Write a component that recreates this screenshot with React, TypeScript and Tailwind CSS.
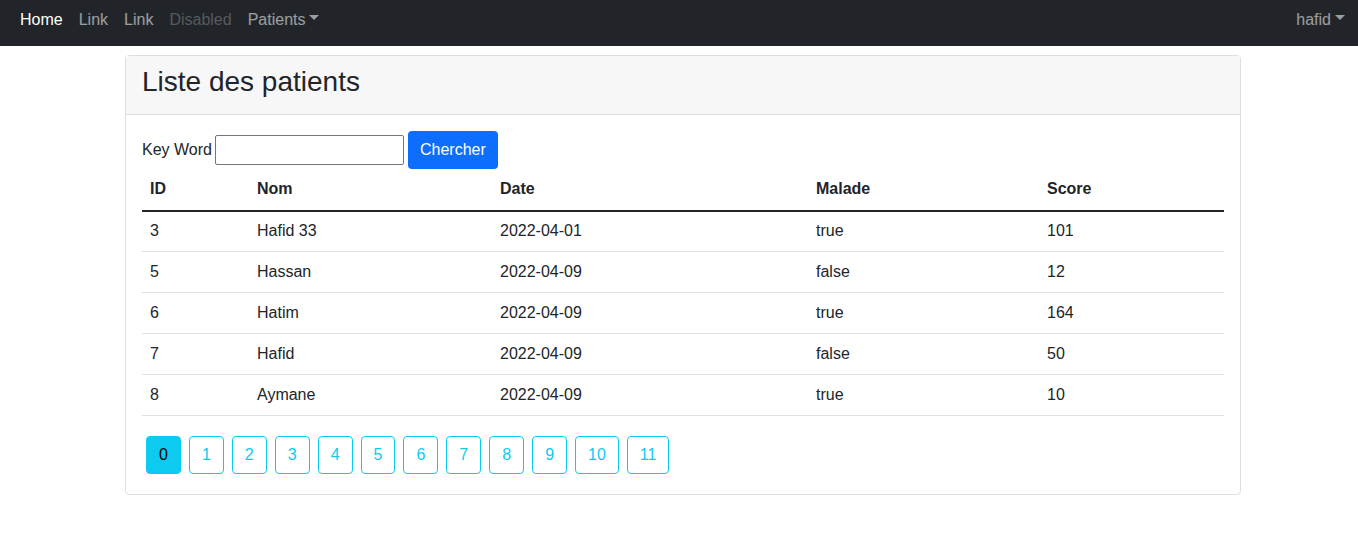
import React, { useState } from "react";

type Patient = { id: number; nom: string; date: string; malade: boolean; score: number };

const patients: Patient[] = [
  { id: 3, nom: "Hafid 33", date: "2022-04-01", malade: true, score: 101 },
  { id: 5, nom: "Hassan", date: "2022-04-09", malade: false, score: 12 },
  { id: 6, nom: "Hatim", date: "2022-04-09", malade: true, score: 164 },
  { id: 7, nom: "Hafid", date: "2022-04-09", malade: false, score: 50 },
  { id: 8, nom: "Aymane", date: "2022-04-09", malade: true, score: 10 },
];

const pages = [0, 1, 2, 3, 4, 5, 6, 7, 8, 9, 10, 11];

function Caret() {
  return (
    <span className="ml-[4px] inline-block h-0 w-0 translate-y-[-3px] border-x-[5px] border-t-[5px] border-x-transparent border-t-current align-middle" />
  );
}

export default function App() {
  const [keyword, setKeyword] = useState("");
  const [current, setCurrent] = useState(0);

  return (
    <div className="min-h-[537px] bg-white text-[16px] leading-6 text-[#212529] [font-family:'Liberation_Sans',Arial,sans-serif]">
      {/* navbar */}
      <nav className="flex h-[46px] items-start justify-between bg-[#212529] px-3 pt-[8px]">
        <ul className="flex">
          <li><a href="#" className="block px-2 text-white">Home</a></li>
          <li><a href="#" className="block px-2 text-white/55">Link</a></li>
          <li><a href="#" className="block px-2 text-white/55">Link</a></li>
          <li><span className="block px-2 text-white/25">Disabled</span></li>
          <li>
            <a href="#" className="block px-2 text-white/55">
              Patients<Caret />
            </a>
          </li>
        </ul>
        <a href="#" className="block pl-2 pr-[1px] text-white/55">
          hafid<Caret />
        </a>
      </nav>

      <div className="ml-[125px] mt-[9px] w-[1116px]">
        <div className="rounded-[4px] border border-[#dfdfdf]">
          <div className="border-b border-[#dfdfdf] bg-[#f7f7f7] px-4 pb-[7px] pt-[9px]">
            <h3 className="text-[28px] font-medium leading-[1.2] mb-0 pb-[8px]">Liste des patients</h3>
          </div>
          <div className="px-4 pt-4 pb-[16px]">
            <form className="flex items-center" onSubmit={(e) => e.preventDefault()}>
              <label className="mr-[3px]">Key Word</label>
              <input
                value={keyword}
                onChange={(e) => setKeyword(e.target.value)}
                className="h-[30px] w-[189px] rounded-[2px] border border-[#767676] px-1 outline-none"
              />
              <button
                type="submit"
                className="ml-[4px] h-[38px] rounded-[4px] bg-[#0d6efd] px-3 text-white"
              >
                Chercher
              </button>
            </form>

            <table className="w-[1082px] table-fixed border-collapse">
              <colgroup>
                <col className="w-[107px]" />
                <col className="w-[243px]" />
                <col className="w-[316px]" />
                <col className="w-[231px]" />
                <col className="w-[185px]" />
              </colgroup>
              <thead>
                <tr className="border-b-2 border-[#212529] text-left font-bold">
                  <th className="h-[42px] px-2">ID</th>
                  <th className="px-2">Nom</th>
                  <th className="px-2">Date</th>
                  <th className="px-2">Malade</th>
                  <th className="px-2">Score</th>
                </tr>
              </thead>
              <tbody>
                {patients.map((p) => (
                  <tr key={p.id} className="border-b border-[#dee2e6]">
                    <td className="h-[41px] px-2">{p.id}</td>
                    <td className="px-2">{p.nom}</td>
                    <td className="px-2">{p.date}</td>
                    <td className="px-2">{String(p.malade)}</td>
                    <td className="px-2">{p.score}</td>
                  </tr>
                ))}
              </tbody>
            </table>

            <ul className="mt-[20px] flex gap-[8px] pl-[4px] pb-[4px]">
              {pages.map((n) => (
                <li key={n}>
                  <button
                    onClick={() => setCurrent(n)}
                    className={
                      n === current
                        ? "h-[38px] rounded-[4px] border border-[#0dcaf0] bg-[#0dcaf0] px-3 text-black"
                        : "h-[38px] rounded-[4px] border border-[#0dcaf0] px-3 text-[#0dcaf0]"
                    }
                  >
                    {n}
                  </button>
                </li>
              ))}
            </ul>
          </div>
        </div>
      </div>
    </div>
  );
}
